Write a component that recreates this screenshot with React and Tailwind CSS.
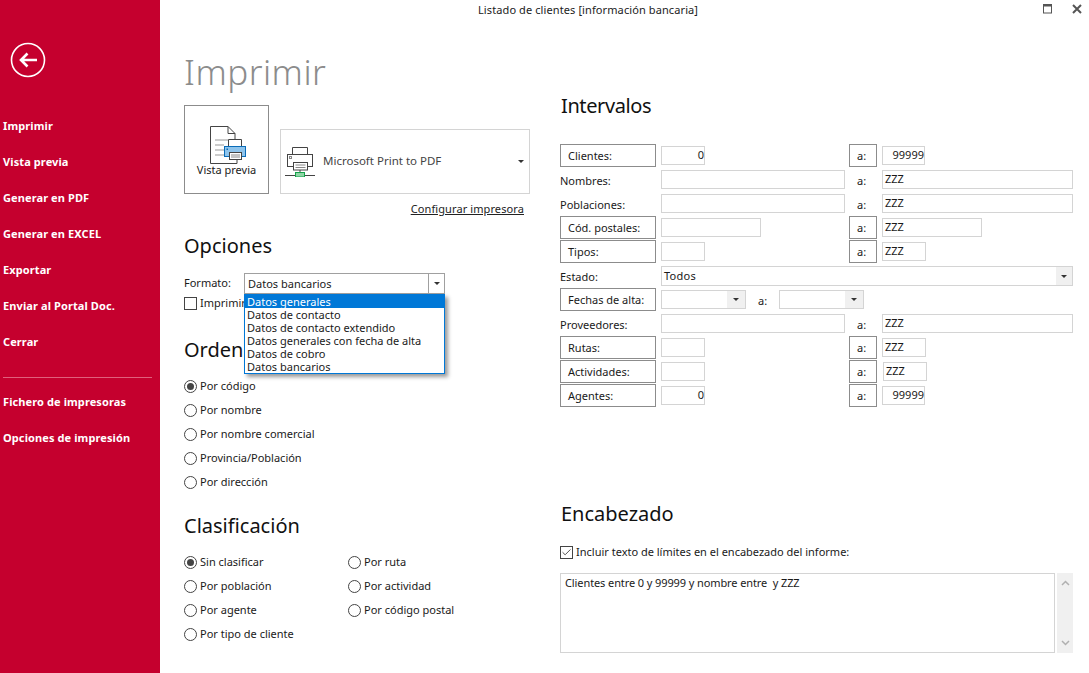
import { Check } from "lucide-react";

const menuTop = ["Imprimir", "Vista previa", "Generar en PDF", "Generar en EXCEL", "Exportar", "Enviar al Portal Doc.", "Cerrar"];
const menuBottom = ["Fichero de impresoras", "Opciones de impresión"];
const formatos = ["Datos generales", "Datos de contacto", "Datos de contacto extendido", "Datos generales con fecha de alta", "Datos de cobro", "Datos bancarios"];
const ordenes = ["Por código", "Por nombre", "Por nombre comercial", "Provincia/Población", "Por dirección"];

function Arrow() {
  return <span className="w-0 h-0 border-x-[3px] border-x-transparent border-t-[3px] border-t-[#333]" />;
}

function Radio({ label, checked }) {
  return (
    <div className="flex items-center h-6 gap-[3px]">
      <span className="w-[13px] h-[13px] rounded-full border border-[#444] flex items-center justify-center bg-white">
        {checked && <span className="w-[7px] h-[7px] rounded-full bg-[#444]" />}
      </span>
      <span>{label}</span>
    </div>
  );
}

function Heading({ children, className }) {
  return <h2 className={`h-7 leading-7 text-[20px] text-[#111] ${className}`}>{children}</h2>;
}

function Field({ className, value, right }) {
  return (
    <div className={`h-[19px] leading-[16px] border border-[#d4d4d4] ${right ? "text-right" : "pl-[2px]"} ${className}`}>
      {value}
    </div>
  );
}

function RowLabel({ text, boxed }) {
  if (boxed) {
    return <div className="w-[96px] h-[23px] leading-[21px] border border-[#8c8c8c] pl-[7px] shrink-0">{text}</div>;
  }
  return <div className="w-[96px] h-[23px] leading-[25px] shrink-0">{text}</div>;
}

function ToLabel({ boxed }) {
  if (boxed) {
    return <div className="w-[28px] h-[23px] leading-[21px] border border-[#8c8c8c] pl-[7px] shrink-0">a:</div>;
  }
  return <div className="w-[28px] h-[23px] leading-[25px] pl-2 shrink-0">a:</div>;
}

function Row({ label, boxed, fromClass, fromValue, toBoxed, toClass, toValue, toRight }) {
  return (
    <div className="flex items-start h-6">
      <RowLabel text={label} boxed={boxed} />
      <div className="w-[188px] ml-[5px] pt-[2px] shrink-0">
        <Field className={fromClass} value={fromValue} right={!!fromValue} />
      </div>
      <ToLabel boxed={toBoxed} />
      <div className="ml-[5px] pt-[2px] grow">
        <Field className={toClass} value={toValue} right={toRight} />
      </div>
    </div>
  );
}

function DateCombo() {
  return (
    <div className="w-[85px] h-[19px] border border-[#d4d4d4] flex justify-end">
      <span className="w-[18px] bg-[#f0f0f0] flex items-center justify-center"><Arrow /></span>
    </div>
  );
}

export default function App() {
  return (
    <div className="flex w-[1089px] h-[673px] overflow-hidden bg-white text-[11px] text-[#1a1a1a] font-['Noto_Sans',sans-serif]">
      {/* ==== Sidebar ==== */}
      <aside className="w-[160px] shrink-0 bg-[#c5002e] text-white font-bold tracking-[0.1px]">
        <svg className="ml-[10px] mt-[42px] block" width="36" height="36" viewBox="0 0 36 36" fill="none" stroke="white">
          <circle cx="18" cy="18" r="16.5" strokeWidth="1.6" />
          <path d="M27 18H11M17.5 11.5L11 18l6.5 6.5" strokeWidth="2.6" />
        </svg>
        <nav className="mt-[30px]">
          {menuTop.map((item) => (
            <div key={item} className="h-9 leading-9 pl-[3px]">{item}</div>
          ))}
        </nav>
        <div className="mt-[17px] ml-[3px] w-[149px] h-px bg-[#e0607c]" />
        <nav className="mt-[6px]">
          {menuBottom.map((item) => (
            <div key={item} className="h-9 leading-9 pl-[3px]">{item}</div>
          ))}
        </nav>
      </aside>

      <div className="flex-1 min-w-0">
        {/* ==== Title bar ==== */}
        <div className="flex h-5 items-center">
          <span className="ml-[318px] text-[#222] tracking-[0.1px]">Listado de clientes [información bancaria]</span>
          <svg className="ml-auto mr-[19px] mb-[3px]" width="10" height="10" viewBox="0 0 10 10" fill="none">
            <rect x="0.5" y="0.5" width="8" height="8.5" stroke="#555" />
            <rect x="0" y="0" width="9" height="2.5" fill="#555" />
          </svg>
          <svg className="mr-[7px] mb-[3px]" width="10" height="10" viewBox="0 0 10 10" fill="none" stroke="#555" strokeWidth="2">
            <path d="M1 1l8 8M9 1l-8 8" />
          </svg>
        </div>

        <div className="flex">
          {/* ==== Left column ==== */}
          <section className="w-[346px] ml-[24px] shrink-0 relative">
            <h1 className="mt-[30px] h-[43px] leading-[43px] text-[35px] font-light text-[#8c8c8c] tracking-[0.5px]">Imprimir</h1>

            <div className="mt-[12px] flex items-end gap-[11px]">
              <button className="w-[85px] h-[89px] border border-[#8c8c8c] flex flex-col items-center pt-[19px]">
                <svg className="ml-[3px]" width="40" height="40" viewBox="0 0 40 40" fill="none" stroke="#444">
                  <path d="M2.5 1.5H20L27 8.5V14M20 1.5V8.5H27M2.5 1.5V38.5H29V34" />
                  <path d="M7 15H20M7 20H16M7 25H16M7 30H20" stroke="#999" />
                  <path d="M20.5 21V14.5H33.5V21" />
                  <rect x="16.5" y="21.5" width="21" height="10" fill="#8ec4ec" stroke="#0a6cb8" />
                  <rect x="21.5" y="27.5" width="12" height="7" fill="white" />
                  <path d="M23 30H32M23 32H32" stroke="#888" />
                  <rect x="18.5" y="23.5" width="1.5" height="1.5" fill="#0a6cb8" stroke="none" />
                </svg>
                <span className="mt-[-3px] text-[#222]">Vista previa</span>
              </button>
              <div className="w-[250px] h-[65px] border border-[#d4d4d4] flex items-center pl-[4px] pr-[5px]">
                <svg width="30" height="30" viewBox="0 0 30 30" fill="none" stroke="#444">
                  <path d="M7.5 7V.5H22.5V7" />
                  <rect x="2.5" y="7.5" width="25" height="12" fill="white" />
                  <rect x="8.5" y="15.5" width="14" height="7.5" fill="white" />
                  <path d="M10.5 18H20.5M10.5 20.5H20.5" stroke="#888" />
                  <rect x="4.5" y="9.5" width="2" height="2" stroke="#888" />
                  <path d="M0 28.5H30M15 23v3" />
                  <rect x="10.5" y="25.5" width="9" height="4.5" fill="#8ed6a5" stroke="#15a04a" />
                </svg>
                <span className="ml-[8px] mb-[2px] text-[11.5px] text-[#444]">Microsoft Print to PDF</span>
                <span className="ml-auto flex items-center"><Arrow /></span>
              </div>
            </div>

            <div className="mt-[7px] h-4 leading-4 text-right pr-[6px] underline text-[#222] tracking-[0.1px]">Configurar impresora</div>

            <Heading className="mt-[15px]">Opciones</Heading>

            <div className="mt-[13px] flex items-center h-[21px]">
              <span className="w-[60px]">Formato:</span>
              <div className="w-[201px] h-[21px] border border-[#a0a0a0] flex items-center pl-[3px]">
                <span className="grow pt-px">Datos bancarios</span>
                <span className="w-[16px] h-full border-l border-[#a0a0a0] flex items-center justify-center"><Arrow /></span>
              </div>
            </div>

            <div className="mt-[2px] flex items-center h-[15px] gap-[3px]">
              <span className="w-[13px] h-[13px] border border-[#444]" />
              <span>Imprimir</span>
            </div>

            <Heading className="mt-[25px]">Orden</Heading>

            <div className="mt-[10px]">
              {ordenes.map((o, i) => (
                <Radio key={o} label={o} checked={i === 0} />
              ))}
            </div>

            <Heading className="mt-[18px]">Clasificación</Heading>

            <div className="mt-[10px] grid grid-cols-[164px_1fr]">
              <Radio label="Sin clasificar" checked />
              <Radio label="Por ruta" />
              <Radio label="Por población" />
              <Radio label="Por actividad" />
              <Radio label="Por agente" />
              <Radio label="Por código postal" />
              <Radio label="Por tipo de cliente" />
            </div>

            {/* Dropdown abierto sobre el formulario */}
            <ul className="absolute left-[60px] top-[274px] w-[201px] h-[80px] border border-[#0078d7] bg-white shadow-[3px_3px_4px_rgba(0,0,0,0.4)]">
              {formatos.map((f, i) => (
                <li key={f} className={`h-[13px] leading-[13px] pl-[2px] ${i === 0 ? "bg-[#0078d7] text-white" : ""}`}>{f}</li>
              ))}
            </ul>
          </section>

          {/* ==== Right column ==== */}
          <section className="w-[513px] ml-[30px] shrink-0">
            <Heading className="mt-[72px] pl-px tracking-[-0.4px]">Intervalos</Heading>

            <div className="mt-[24px]">
              <Row label="Clientes:" boxed fromClass="w-[44px]" fromValue="0" toBoxed toClass="w-[43px]" toValue="99999" toRight />
              <Row label="Nombres:" fromClass="w-[184px]" toClass="w-full" toValue="ZZZ" />
              <Row label="Poblaciones:" fromClass="w-[184px]" toClass="w-full" toValue="ZZZ" />
              <Row label="Cód. postales:" boxed fromClass="w-[100px]" toBoxed toClass="w-[100px]" toValue="ZZZ" />
              <Row label="Tipos:" boxed fromClass="w-[44px]" toBoxed toClass="w-[44px]" toValue="ZZZ" />

              <div className="flex items-start h-6">
                <RowLabel text="Estado:" />
                <div className="ml-[5px] mt-[2px] grow h-5 border border-[#d4d4d4] flex">
                  <span className="grow pl-[2px] leading-[18px] tracking-[0.25px]">Todos</span>
                  <span className="w-[16px] bg-[#f0f0f0] flex items-center justify-center"><Arrow /></span>
                </div>
              </div>

              <div className="flex items-start h-6">
                <RowLabel text="Fechas de alta:" boxed />
                <div className="ml-[5px] mt-[2px] flex">
                  <DateCombo />
                  <span className="w-[33px] pl-[12px] leading-[21px]">a:</span>
                  <DateCombo />
                </div>
              </div>

              <Row label="Proveedores:" fromClass="w-[184px]" toClass="w-full" toValue="ZZZ" />
              <Row label="Rutas:" boxed fromClass="w-[44px]" toBoxed toClass="w-[44px]" toValue="ZZZ" />
              <Row label="Actividades:" boxed fromClass="w-[44px]" toBoxed toClass="w-[44px] ml-px" toValue="ZZZ" />
              <Row label="Agentes:" boxed fromClass="w-[44px]" fromValue="0" toBoxed toClass="w-[43px]" toValue="99999" toRight />
            </div>

            <Heading className="mt-[92px] pl-px">Encabezado</Heading>

            <div className="mt-[16px] flex items-center h-4 gap-[3px]">
              <span className="w-[13px] h-[13px] border border-[#444] flex items-center justify-center">
                <Check size={11} strokeWidth={2} color="#444" />
              </span>
              <span>Incluir texto de límites en el encabezado del informe:</span>
            </div>

            <div className="mt-[13px] flex h-[80px] gap-[2px]">
              <div className="grow border border-[#d4d4d4] pl-[4px] pt-[1px] tracking-[-0.1px]">Clientes entre 0 y 99999 y nombre entre&nbsp; y ZZZ</div>
              <div className="w-[16px] bg-[#f0f0f0] flex flex-col justify-between items-center py-[7px]">
                <svg width="9" height="6" viewBox="0 0 9 6" fill="none" stroke="#b0b0b0" strokeWidth="1.5"><path d="M1 5l3.5-3.5L8 5" /></svg>
                <svg width="9" height="6" viewBox="0 0 9 6" fill="none" stroke="#b0b0b0" strokeWidth="1.5"><path d="M1 1l3.5 3.5L8 1" /></svg>
              </div>
            </div>
          </section>
        </div>
      </div>
    </div>
  );
}
